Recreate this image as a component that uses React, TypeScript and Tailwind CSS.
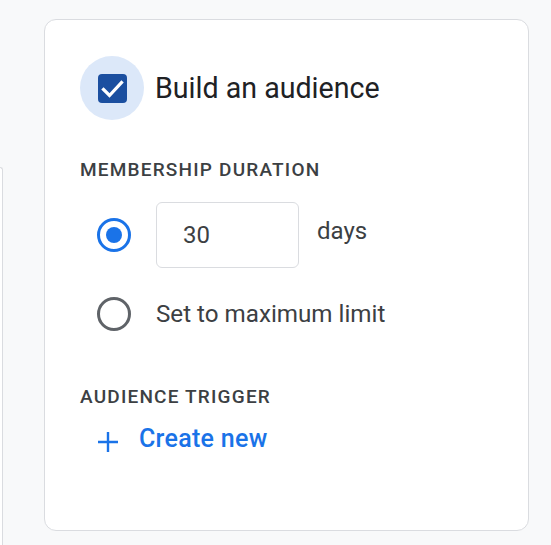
import React from "react";

export default function App() {
  return (
    <div
      className="w-[551px] h-[545px] overflow-hidden bg-[#f8f9fa] flex items-start pt-[19px]"
      style={{ fontFamily: "Roboto, 'Noto Sans', sans-serif" }}
    >
      {/* left neighbour panel (mostly off-screen) */}
      <div className="shrink-0 w-[3px] h-[420px] mt-[148px] bg-white border-t border-r border-[#dadce0] rounded-tr-[6px]" />

      {/* main card */}
      <div className="shrink-0 ml-[41px] w-[485px] h-[512px] bg-white border border-[#dadce0] rounded-[12px] pl-[35px] pt-[36px]">
        {/* checkbox row */}
        <div className="flex items-center h-[64px]">
          <div className="w-[64px] h-[64px] rounded-full bg-[#dce8f9] flex items-center justify-center">
            <div className="w-[29px] h-[29px] rounded-[4px] bg-[#1b4fa0] flex items-center justify-center">
              <svg width="29" height="29" viewBox="0 0 29 29" fill="none">
                <path
                  d="M5.5 15.5 L11.5 21.5 L23.5 8.5"
                  stroke="#ffffff"
                  strokeWidth="3.2"
                  strokeLinecap="square"
                  strokeLinejoin="miter"
                />
              </svg>
            </div>
          </div>
          <span className="ml-[11px] text-[28.6px] leading-[36px] text-[#202124]">Build an audience</span>
        </div>

        {/* membership duration */}
        <div className="mt-[38px] text-[19px] leading-[24px] font-medium tracking-[1.2px] text-[#3c4043]">
          MEMBERSHIP DURATION
        </div>

        <div className="mt-[20px] flex items-center h-[66px]">
          <div className="w-[68px] flex justify-center">
            <div className="w-[34px] h-[34px] rounded-full border-[3px] border-[#1a73e8] flex items-center justify-center">
              <div className="w-[16px] h-[16px] rounded-full bg-[#1a73e8]" />
            </div>
          </div>
          <div className="ml-[8px] w-[143px] h-[66px] border border-[#dadce0] rounded-[6px] flex items-center pl-[26px] text-[24px] text-[#3c4043]">
            30
          </div>
          <span className="ml-[18px] mb-[8px] text-[24px] leading-[32px] text-[#3c4043]">days</span>
        </div>

        <div className="mt-[14px] flex items-center h-[64px]">
          <div className="w-[68px] flex justify-center">
            <div className="w-[34px] h-[34px] rounded-full border-[3px] border-[#5f6368]" />
          </div>
          <span className="ml-[8px] text-[24.2px] leading-[32px] text-[#3c4043]">Set to maximum limit</span>
        </div>

        {/* audience trigger */}
        <div className="mt-[39px] text-[19px] leading-[24px] font-medium tracking-[1.2px] text-[#3c4043]">
          AUDIENCE TRIGGER
        </div>

        <div className="mt-[10px] flex items-center h-[40px]">
          <svg className="ml-[18px] mt-[6px]" width="20" height="20" viewBox="0 0 20 20" fill="none">
            <path d="M10 0 V20 M0 10 H20" stroke="#1a73e8" strokeWidth="2.4" />
          </svg>
          <span className="ml-[21px] text-[25px] leading-[32px] font-medium tracking-[0.3px] text-[#1a73e8]">Create new</span>
        </div>
      </div>
    </div>
  );
}
